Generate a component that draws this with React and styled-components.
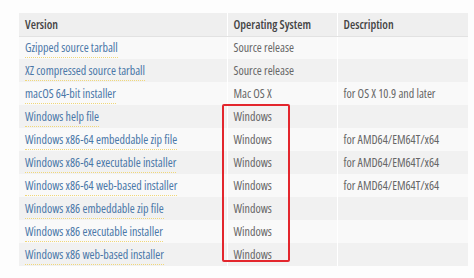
import React from "react";
import styled, { createGlobalStyle } from "styled-components";

const Global = createGlobalStyle`
  html, body { margin: 0; padding: 0; background: #ffffff; }
  body { font-family: "Open Sans", sans-serif; }
`;

const Page = styled.div`
  width: 474px;
  height: 278px;
  box-sizing: border-box;
  padding: 13px 6px 0 19px;
  background: #fdfdfd;
`;

const Wrap = styled.div`
  position: relative;
  width: 449px;
`;

const Table = styled.table`
  width: 449px;
  border-collapse: collapse;
  table-layout: fixed;
  font-family: "Open Sans", sans-serif;
  font-stretch: 87.5%;
  font-size: 12px;
`;

const Col = styled.col`
  width: ${(p) => p.$w}px;
`;

const HeadCell = styled.th`
  height: 23px;
  padding: 0 6px;
  text-align: left;
  font-family: "Open Sans", sans-serif;
  font-stretch: 87.5%;
  font-size: 12px;
  font-weight: 600;
  color: #444;
  background: #efefef;
  border-right: 1px solid #fff;
  border-bottom: 1px solid #e2e2e2;
  box-sizing: border-box;
  &:last-child { border-right: none; }
`;

const Row = styled.tr`
  background: ${(p) => (p.$alt ? "#f1f1f1" : "#f9f9f9")};
`;

const Cell = styled.td`
  height: 23px;
  padding: 0 6px;
  font-family: "Open Sans", sans-serif;
  font-stretch: 87.5%;
  font-size: 12px;
  color: #666;
  border-right: 1px solid #fff;
  box-sizing: border-box;
  white-space: nowrap;
  &:last-child { border-right: none; }
`;

const Link = styled.a`
  color: #4a77a8;
  text-decoration: none;
  border-bottom: 1px dotted #f0d779;
  padding-bottom: 1px;
`;

const Highlight = styled.div`
  position: absolute;
  left: 203px;
  top: 91px;
  width: 68px;
  height: 158px;
  box-sizing: border-box;
  border: 2px solid #e3262d;
  border-radius: 2px;
  pointer-events: none;
`;

const rows = [
  ["Gzipped source tarball", "Source release", ""],
  ["XZ compressed source tarball", "Source release", ""],
  ["macOS 64-bit installer", "Mac OS X", "for OS X 10.9 and later"],
  ["Windows help file", "Windows", ""],
  ["Windows x86-64 embeddable zip file", "Windows", "for AMD64/EM64T/x64"],
  ["Windows x86-64 executable installer", "Windows", "for AMD64/EM64T/x64"],
  ["Windows x86-64 web-based installer", "Windows", "for AMD64/EM64T/x64"],
  ["Windows x86 embeddable zip file", "Windows", ""],
  ["Windows x86 executable installer", "Windows", ""],
  ["Windows x86 web-based installer", "Windows", ""],
];

export default function App() {
  return (
    <Page>
      <Global />
      <Wrap>
        <Table>
          <colgroup>
            <Col $w={208} />
            <Col $w={110} />
            <Col $w={131} />
          </colgroup>
          <thead>
            <tr>
              <HeadCell>Version</HeadCell>
              <HeadCell>Operating System</HeadCell>
              <HeadCell>Description</HeadCell>
            </tr>
          </thead>
          <tbody>
            {rows.map((r, i) => (
              <Row key={i} $alt={i % 2 === 1}>
                <Cell>
                  <Link href="#">{r[0]}</Link>
                </Cell>
                <Cell>{r[1]}</Cell>
                <Cell>{r[2]}</Cell>
              </Row>
            ))}
          </tbody>
        </Table>
        <Highlight />
      </Wrap>
    </Page>
  );
}
